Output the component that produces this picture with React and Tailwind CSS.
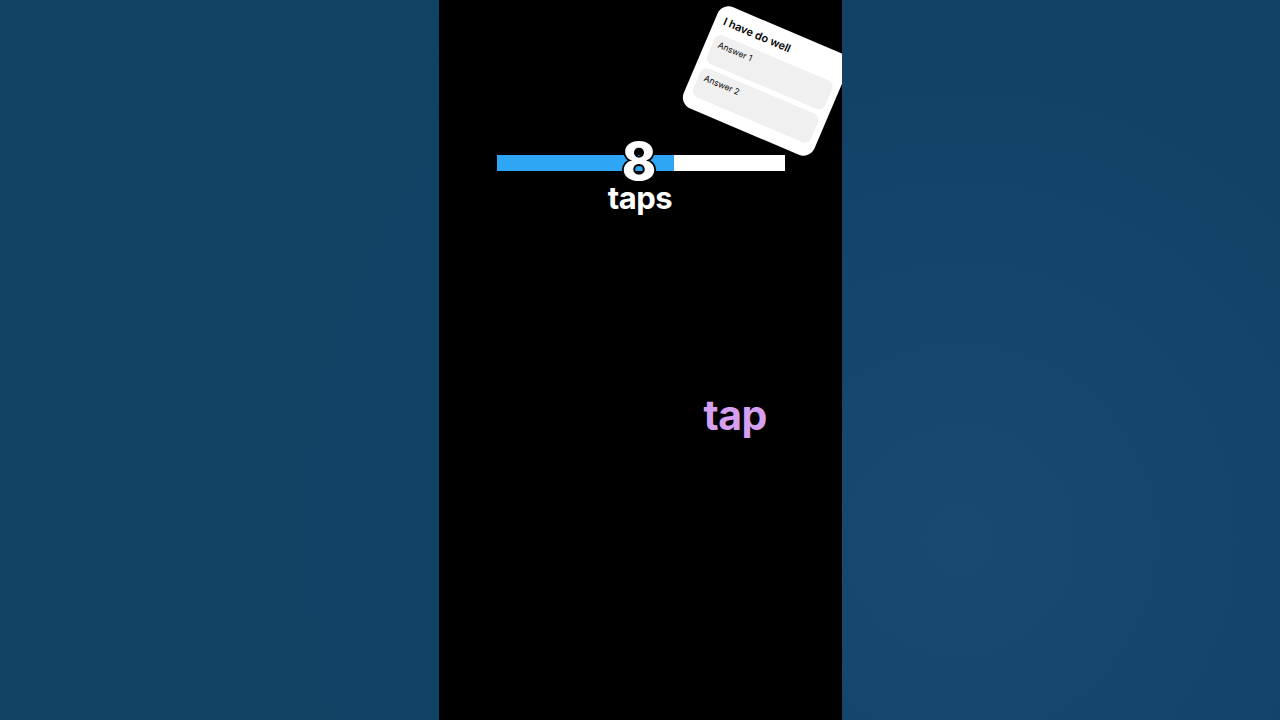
import React from 'react';

const Card = () => (
  <div className="absolute left-[256px] top-[26px] w-[142px] h-[110px] rotate-[23deg] bg-white rounded-[12px] px-[7px] pt-[9px] text-black">
    <div className="text-[11px] font-semibold leading-[14px] pl-[2px]">I have do well</div>
    <div className="mt-[7px] flex flex-col gap-[5px] text-[8.5px] leading-[11px]">
      <div className="h-[31px] rounded-[7px] bg-[#f0f0f0] px-[6px] pt-[5px]">Answer 1</div>
      <div className="h-[31px] rounded-[7px] bg-[#f0f0f0] px-[6px] pt-[5px]">Answer 2</div>
    </div>
  </div>
);

const App = () => {
  const progress = 61.5;

  return (
    <div
      className="w-[1280px] h-[720px] flex justify-center overflow-hidden bg-[radial-gradient(circle_at_960px_540px,#18496f_0%,#124368_35%,#0f4263_70%)]"
      style={{ fontFamily: 'Inter, "Noto Sans", sans-serif' }}
    >
      <div className="relative w-[403px] h-[720px] bg-black overflow-hidden flex flex-col items-center">
        <Card />

        <div className="relative mt-[155px] w-[288px] h-[16px] bg-white ml-[1px]">
          <div className="h-full bg-[#2ea6f4]" style={{ width: `${progress}%` }} />
          <div className="absolute left-0 right-0 top-[-23px] text-center text-[52px] leading-[60px] font-extrabold text-white [-webkit-text-stroke:4px_black] [paint-order:stroke_fill] -ml-[3px]">
            8
          </div>
        </div>
        <div className="mt-[8px] text-[31px] leading-[38px] font-bold text-white tracking-[-0.5px]">taps</div>

        <div className="absolute left-[265px] top-[390px] text-[41px] leading-[50px] font-bold text-[#d6a0f2] tracking-[-0.5px]">
          tap
        </div>
      </div>
    </div>
  );
};

export default App;
